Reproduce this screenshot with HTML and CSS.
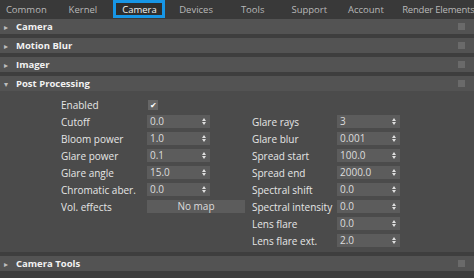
FILE: index.html
```html
<!DOCTYPE html>
<html lang="en">
<head>
  <meta charset="UTF-8" />
  <title>Render Setup - Camera</title>
  <link rel="stylesheet" href="styles.css">
</head>
<body>
  <div class="tabs">
    <span class="tab">Common</span>
    <span class="tab">Kernel</span>
    <span class="tab active">Camera</span>
    <span class="tab">Devices</span>
    <span class="tab">Tools</span>
    <span class="tab">Support</span>
    <span class="tab">Account</span>
    <span class="tab last">Render Elements</span>
  </div>

  <div class="rollout">
    <div class="head"><span class="arrow">&#9656;</span>Camera<span class="pin"></span></div>
  </div>
  <div class="rollout">
    <div class="head"><span class="arrow">&#9656;</span>Motion Blur<span class="pin"></span></div>
  </div>
  <div class="rollout">
    <div class="head"><span class="arrow">&#9656;</span>Imager<span class="pin"></span></div>
  </div>
  <div class="rollout open">
    <div class="head"><span class="arrow">&#9662;</span>Post Processing<span class="pin"></span></div>
    <div class="body">
      <div class="col">
        <div class="row"><label>Enabled</label><span class="check">&#10004;</span></div>
        <div class="row"><label>Cutoff</label><span class="spin">0.0</span></div>
        <div class="row"><label>Bloom power</label><span class="spin">1.0</span></div>
        <div class="row"><label>Glare power</label><span class="spin">0.1</span></div>
        <div class="row"><label>Glare angle</label><span class="spin">15.0</span></div>
        <div class="row"><label>Chromatic aber.</label><span class="spin">0.0</span></div>
        <div class="row"><label>Vol. effects</label><span class="map">No map</span></div>
      </div>
      <div class="col right">
        <div class="row"><label>Glare rays</label><span class="spin">3</span></div>
        <div class="row"><label>Glare blur</label><span class="spin">0.001</span></div>
        <div class="row"><label>Spread start</label><span class="spin">100.0</span></div>
        <div class="row"><label>Spread end</label><span class="spin">2000.0</span></div>
        <div class="row"><label>Spectral shift</label><span class="spin">0.0</span></div>
        <div class="row"><label>Spectral intensity</label><span class="spin">0.0</span></div>
        <div class="row"><label>Lens flare</label><span class="spin">0.0</span></div>
        <div class="row"><label>Lens flare ext.</label><span class="spin">2.0</span></div>
      </div>
    </div>
  </div>
  <div class="rollout">
    <div class="head"><span class="arrow">&#9656;</span>Camera Tools<span class="pin"></span></div>
  </div>
</body>
</html>
```

FILE: styles.css
```css
:root {
  --page: #3e3e3e;
  --tabbar: #393939;
  --head: #535353;
  --panel: #4b4b4b;
  --field: #5c5c5c;
  --text: #e6e6e6;
  --blue: #1796e6;
}

* {
  box-sizing: border-box;
}

body {
  margin: 0;
  background: var(--page);
  font-family: "Open Sans", "Noto Sans", sans-serif;
  font-size: 10px;
  color: var(--text);
  overflow: hidden;
}

.tabs {
  display: flex;
  height: 19px;
  background: var(--tabbar);
  margin-left: -2px;
  font-size: 9.5px;
}

.tab {
  width: 56.6px;
  flex: none;
  text-align: center;
  line-height: 19px;
  color: #b8b8b8;
  white-space: nowrap;
}

.tab.active {
  width: 52px;
  margin: 0 2.3px;
  height: 18px;
  line-height: 13px;
  border: 3px solid var(--blue);
  background: #2e2e2e;
  color: #f4f4f4;
}

.tab.last {
  width: auto;
  padding-left: 8px;
  letter-spacing: -0.2px;
}

.rollout {
  background: var(--panel);
  margin-bottom: 4px;
}

.head {
  display: flex;
  align-items: center;
  height: 15px;
  background: var(--head);
  font-size: 9.5px;
  font-weight: bold;
  color: #f2f2f2;
  padding-left: 4px;
}

.arrow {
  width: 12px;
  font-size: 8px;
  color: #bdbdbd;
  font-weight: normal;
}

.pin {
  margin-left: auto;
  margin-right: 9px;
  width: 7px;
  height: 7px;
  background: #6a6a6a;
}

.open .head {
  margin-bottom: 5px;
}

.body {
  display: flex;
  padding: 0 0 8px 61px;
  height: 156px;
}

.col {
  width: 191px;
}

.right {
  padding-top: 17px;
}

.row {
  display: flex;
  align-items: center;
  height: 17px;
}

.row label {
  width: 86px;
  white-space: nowrap;
}

.right label {
  width: 85px;
}

.spin {
  position: relative;
  width: 63px;
  height: 13px;
  line-height: 13px;
  background: var(--field);
  padding-left: 3px;
  color: #dcdcdc;
}

.spin::after {
  content: "";
  position: absolute;
  right: 4px;
  top: 3px;
  width: 0;
  height: 0;
  border-left: 2px solid transparent;
  border-right: 2px solid transparent;
  border-bottom: 3px solid #e0e0e0;
}

.spin::before {
  content: "";
  position: absolute;
  right: 4px;
  bottom: 3px;
  width: 0;
  height: 0;
  border-left: 2px solid transparent;
  border-right: 2px solid transparent;
  border-top: 3px solid #e0e0e0;
}

.check {
  width: 10px;
  height: 10px;
  margin-left: 1px;
  background: #666;
  font-size: 8px;
  line-height: 10px;
  text-align: center;
  color: #fff;
}

.map {
  width: 98px;
  height: 13px;
  line-height: 13px;
  background: var(--field);
  text-align: center;
  color: #dcdcdc;
}
```
